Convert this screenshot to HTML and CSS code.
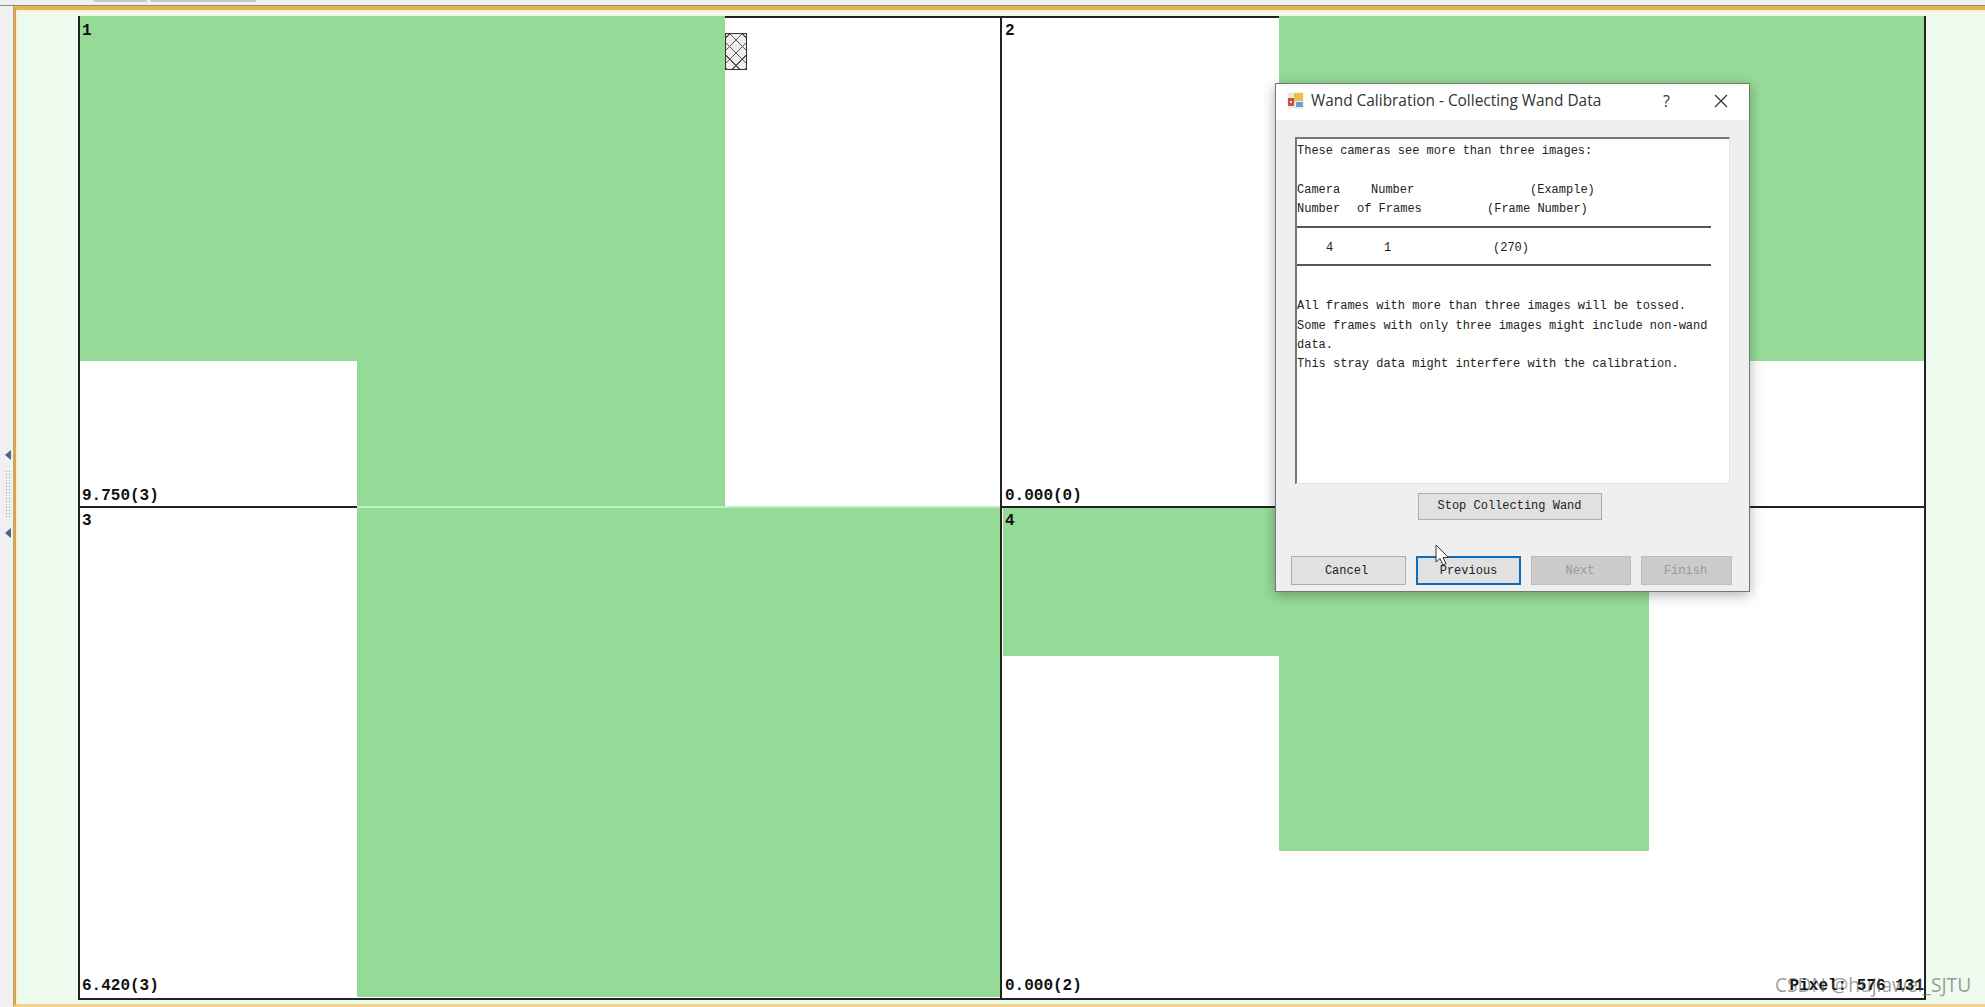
FILE: index.html
```html
<!DOCTYPE html>
<html lang="en">
<head>
    <meta charset="UTF-8">
    <title>Wand Calibration</title>
    <link rel="stylesheet" href="styles.css">
</head>
<body>

    <div class="topbar">
        <div class="tab tab-a"></div>
        <div class="tab tab-b"></div>
    </div>

    <div class="main">
        <div class="splitter">
            <span class="arrow"></span>
            <span class="grip"></span>
            <span class="arrow"></span>
        </div>

        <div class="frame">
            <div class="plot">
                <!-- camera image blocks -->
                <div class="block b1"></div>
                <div class="block b2"></div>
                <div class="block b3"></div>
                <div class="block b4"></div>
                <div class="block b5"></div>
                <div class="block b6"></div>
                <div class="block seam"></div>
                <div class="hatch"></div>

                <div class="pane pane-left pane-top">
                    <span class="cam-label">1</span>
                    <span class="cam-label">9.750(3)</span>
                </div>
                <div class="pane pane-right pane-top">
                    <span class="cam-label">2</span>
                    <span class="cam-label value">0.000(0)</span>
                </div>
                <div class="pane pane-left">
                    <span class="cam-label">3</span>
                    <span class="cam-label">6.420(3)</span>
                </div>
                <div class="pane pane-right">
                    <span class="cam-label">4</span>
                    <div class="pane-foot">
                        <span class="cam-label value">0.000(2)</span>
                        <span class="cam-label pixel">Pixel: 576 131</span>
                    </div>
                </div>
            </div>
        </div>
    </div>

    <div class="watermark">CSDN @hujiawei_SJTU</div>

    <div class="dialog">
        <div class="title-bar">
            <svg class="title-icon" width="17" height="17" viewBox="0 0 17 17">
                <rect x="0.5" y="0.5" width="16" height="16" fill="#e8e8e8"/>
                <rect x="7" y="1" width="9" height="8" fill="#eebf4a"/>
                <rect x="9" y="10" width="7" height="5" fill="#6f9fd8"/>
                <rect x="1" y="6" width="6" height="8" fill="#c8503c"/>
                <rect x="3" y="9" width="2" height="2" fill="#f4e3d0"/>
            </svg>
            <span class="title-text">Wand Calibration - Collecting Wand Data</span>
            <span class="title-help">?</span>
            <svg class="title-close" width="14" height="14" viewBox="0 0 14 14">
                <path d="M1 1 L13 13 M13 1 L1 13" stroke="#333" stroke-width="1.2" fill="none"/>
            </svg>
        </div>

        <div class="dialog-body">
            <div class="textbox">
                <div class="line">These cameras see more than three images:</div>
                <div class="line"></div>
                <div class="line cols">
                    <span>Camera</span>
                    <span class="pad-number">Number</span>
                    <span class="pad-example">(Example)</span>
                </div>
                <div class="line cols">
                    <span>Number</span>
                    <span>of Frames</span>
                    <span>(Frame Number)</span>
                </div>
                <div class="line rule"></div>
                <div class="line cols">
                    <span class="pad-cam">4</span>
                    <span class="pad-frames">1</span>
                    <span class="pad-frame">(270)</span>
                </div>
                <div class="line rule"></div>
                <div class="line"></div>
                <div class="line">All frames with more than three images will be tossed.</div>
                <div class="line">Some frames with only three images might include non-wand</div>
                <div class="line">data.</div>
                <div class="line">This stray data might interfere with the calibration.</div>
            </div>

            <div class="stop-row">
                <button class="btn btn-stop">Stop Collecting Wand</button>
            </div>

            <div class="button-row">
                <button class="btn btn-cancel">Cancel</button>
                <button class="btn btn-previous">Previous</button>
                <button class="btn btn-next" disabled>Next</button>
                <button class="btn btn-finish" disabled>Finish</button>
            </div>
        </div>
    </div>

    <svg class="cursor" width="16" height="24" viewBox="0 0 16 24">
        <path d="M1 1 L1 18 L5 14.5 L8 21 L11 19.6 L8 13.5 L13.5 13.5 Z" fill="#fff" stroke="#333" stroke-width="1"/>
    </svg>

</body>
</html>
```

FILE: styles.css
```css
body {
    margin: 0;
    width: 1985px;
    height: 1007px;
    overflow: hidden;
    background-color: #f0f0f0;
    font-family: 'Liberation Mono', monospace;
}

.topbar {
    display: flex;
    box-sizing: border-box;
    height: 6px;
    padding-left: 94px;
    gap: 3px;
    border-bottom: 1px solid #8f8a78;
}
.tab {
    height: 2px;
    background-color: #c8c8c8;
}
.tab-a {
    width: 53px;
}
.tab-b {
    width: 106px;
}

.main {
    display: flex;
    height: 1001px;
}
.splitter {
    width: 13px;
    display: flex;
    flex-direction: column;
    align-items: center;
    justify-content: center;
    gap: 10px;
    padding-bottom: 26px;
    box-sizing: border-box;
    padding-left: 3px;
}
.arrow {
    width: 0;
    height: 0;
    border-top: 5px solid transparent;
    border-bottom: 5px solid transparent;
    border-right: 6px solid #4f6288;
}
.grip {
    width: 7px;
    height: 48px;
    background-image: radial-gradient(circle, #8d97ad 1px, transparent 1px);
    background-size: 3px 3px;
}

.frame {
    flex: 1;
    box-sizing: border-box;
    padding: 6px 0 0 62px;
    border-top: 4px solid #e6b25a;
    border-left: 3px solid #d3a55c;
    border-bottom: 3px solid #f3cf8a;
    background-color: #edfbee;
    box-shadow: inset 2px 2px 0 #fdf0c8;
}

.plot {
    position: relative;
    box-sizing: border-box;
    width: 1848px;
    height: 984px;
    border: 2px solid #222;
    background-color: white;
    display: grid;
    grid-template-columns: 922px 1fr;
    grid-template-rows: 490px 1fr;
}

.block {
    position: absolute;
    z-index: 1;
    background-color: #96da98;
}
.b1 { left: 0; top: -2px; width: 645px; height: 345px; }
.b2 { left: 277px; top: 343px; width: 368px; height: 145px; }
.b3 { left: 1199px; top: -2px; width: 645px; height: 345px; }
.b4 { left: 277px; top: 490px; width: 643px; height: 489px; }
.b5 { left: 923px; top: 490px; width: 276px; height: 148px; }
.b6 { left: 1199px; top: 490px; width: 370px; height: 343px; }
.seam {
    left: 277px;
    top: 488px;
    width: 643px;
    height: 2px;
    background-color: #c4eec5;
}

.hatch {
    position: absolute;
    z-index: 1;
    left: 645px;
    top: 15px;
    width: 22px;
    height: 37px;
    border: 1px solid #333;
    box-sizing: border-box;
    background-color: #eee;
    background-image:
        repeating-linear-gradient(45deg, #555 0 1px, transparent 1px 9px),
        repeating-linear-gradient(-45deg, #555 0 1px, transparent 1px 9px);
}

.pane {
    position: relative;
    display: flex;
    flex-direction: column;
    justify-content: space-between;
    padding: 4px 2px 3px 2px;
    box-sizing: border-box;
}
.pane-left {
    border-right: 2px solid #222;
}
.pane-right {
    padding-left: 3px;
}
.pane-top {
    border-bottom: 2px solid #222;
    padding-bottom: 1px;
}
.pane-foot {
    display: flex;
    justify-content: space-between;
}
.cam-label {
    position: relative;
    z-index: 2;
    font-size: 16px;
    line-height: 18px;
    font-weight: bold;
    color: #111;
}
.pixel {
    margin-right: -2px;
}

.watermark {
    position: absolute;
    z-index: 3;
    left: 1775px;
    top: 973px;
    font-family: 'Open Sans', sans-serif;
    font-size: 19.2px;
    line-height: 24px;
    color: rgba(90, 90, 90, 0.6);
}

.dialog {
    position: absolute;
    z-index: 3;
    left: 1275px;
    top: 83px;
    width: 475px;
    height: 509px;
    box-sizing: border-box;
    border: 1px solid #6f7a70;
    background-color: #efefef;
    box-shadow: 0 3px 12px rgba(0, 0, 0, 0.3);
}
.title-bar {
    display: flex;
    align-items: center;
    box-sizing: border-box;
    height: 36px;
    background-color: white;
    padding: 0 21px 3px 11px;
}
.title-icon {
    margin-right: 7px;
}
.title-text {
    flex: 1;
    font-family: 'Open Sans', sans-serif;
    font-size: 15.4px;
    color: #333;
}
.title-help {
    font-family: 'Open Sans', sans-serif;
    font-size: 16px;
    color: #333;
    margin-right: 44px;
}

.dialog-body {
    padding: 17px 17px 0 15px;
}
.textbox {
    box-sizing: border-box;
    width: 435px;
    height: 347px;
    margin-left: 4px;
    padding: 3px 0 0 0;
    background-color: white;
    border-top: 2px solid #777;
    border-left: 2px solid #777;
    border-right: 1px solid #e4e4e4;
    border-bottom: 1px solid #e4e4e4;
    font-size: 12px;
    color: #222;
}
.line {
    height: 19.4px;
    line-height: 19.4px;
    white-space: pre;
}
.cols {
    display: grid;
    grid-template-columns: 60px 130px 1fr;
}
.pad-number { padding-left: 14px; }
.pad-example { padding-left: 43px; }
.pad-cam { padding-left: 29px; }
.pad-frames { padding-left: 27px; }
.pad-frame { padding-left: 6px; }
.rule {
    width: 414px;
    height: 6px;
    border-bottom: 2px solid #555;
    margin-bottom: 11.4px;
}

.btn {
    box-sizing: border-box;
    font-family: 'Liberation Mono', monospace;
    font-size: 12px;
    color: #222;
    background-color: #e1e1e1;
    border: 1px solid #adadad;
    padding: 0;
}
.stop-row {
    display: flex;
    justify-content: center;
    margin-top: 9px;
    padding-right: 4px;
}
.btn-stop {
    width: 184px;
    height: 27px;
    padding-bottom: 2px;
}
.button-row {
    display: flex;
    margin-top: 36px;
    gap: 10px;
}
.btn-cancel {
    width: 115px;
    height: 29px;
    padding-right: 4px;
}
.btn-previous {
    width: 105px;
    height: 29px;
    border: 2px solid #0f6cbd;
}
.btn-next {
    width: 100px;
    height: 29px;
    padding-right: 2px;
}
.btn-finish {
    width: 91px;
    height: 29px;
    padding-right: 2px;
}
.btn:disabled {
    background-color: #cbcbcb;
    border-color: #bdbdbd;
    color: #9a9a9a;
}

.cursor {
    position: absolute;
    z-index: 4;
    left: 1435px;
    top: 544px;
}
```
